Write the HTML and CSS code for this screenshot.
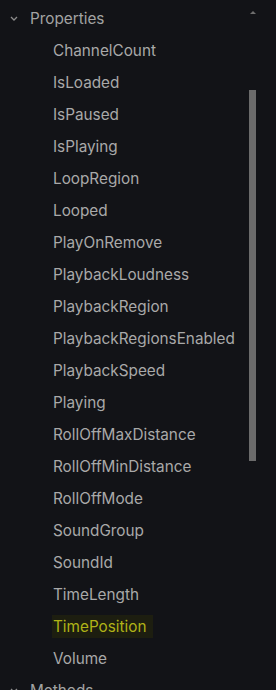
FILE: index.html
```html
<!DOCTYPE html>
<html>
<head>
<meta charset="utf-8">
<link rel="stylesheet" href="styles.css">
</head>
<body>
<div class="panel">
  <div class="section">
    <div class="header">
      <svg class="chev" width="8" height="5" viewBox="0 0 8 5"><path d="M1 1 L4 4 L7 1" fill="none" stroke="#8c8c8c" stroke-width="1.3"/></svg>
      <span>Properties</span>
    </div>
    <ul class="items">
      <li>ChannelCount</li>
      <li>IsLoaded</li>
      <li>IsPaused</li>
      <li>IsPlaying</li>
      <li>LoopRegion</li>
      <li>Looped</li>
      <li>PlayOnRemove</li>
      <li>PlaybackLoudness</li>
      <li>PlaybackRegion</li>
      <li>PlaybackRegionsEnabled</li>
      <li>PlaybackSpeed</li>
      <li>Playing</li>
      <li>RollOffMaxDistance</li>
      <li>RollOffMinDistance</li>
      <li>RollOffMode</li>
      <li>SoundGroup</li>
      <li>SoundId</li>
      <li>TimeLength</li>
      <li><span class="hl">TimePosition</span></li>
      <li>Volume</li>
    </ul>
  </div>
  <div class="section">
    <div class="header">
      <svg class="chev" width="8" height="5" viewBox="0 0 8 5"><path d="M1 1 L4 4 L7 1" fill="none" stroke="#8c8c8c" stroke-width="1.3"/></svg>
      <span>Methods</span>
    </div>
  </div>
  <div class="scroll-up"></div>
  <div class="thumb"></div>
</div>
</body>
</html>
```
FILE: styles.css
```css
html, body {
  margin: 0;
  padding: 0;
  background: #121317;
  height: 690px;
  overflow: hidden;
}
.panel {
  position: relative;
  padding-top: 2px;
  font-family: Inter, "Noto Sans", sans-serif;
  font-size: 15.3px;
  color: #a9a9a9;
}
.header {
  height: 32px;
  display: flex;
  align-items: center;
  padding-left: 10px;
  gap: 12px;
  color: #a3a3a3;
}
.chev { flex: none; }
.items {
  list-style: none;
  margin: 0;
  padding: 0;
}
.items li {
  height: 32px;
  display: flex;
  align-items: center;
  padding-left: 53px;
}
.hl {
  background: #1d1e10;
  color: #b0b317;
  padding: 2px 7px 2px 1px;
  margin-left: -1px;
}
.scroll-up {
  position: absolute;
  top: 11px;
  left: 250px;
  width: 0;
  height: 0;
  border-left: 3px solid transparent;
  border-right: 3px solid transparent;
  border-bottom: 3px solid #6e6e6e;
}
.thumb {
  position: absolute;
  top: 90px;
  left: 249px;
  width: 7px;
  height: 371px;
  background: #6b6b6b;
}
```
